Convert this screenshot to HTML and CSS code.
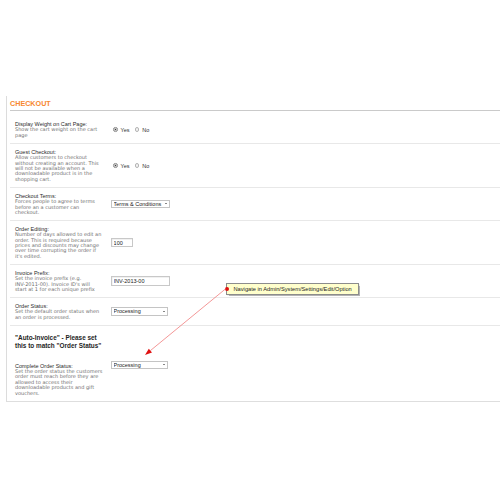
FILE: index.html
```html
<!DOCTYPE html>
<html>
<head>
<meta charset="utf-8">
<title>Checkout settings</title>
<link rel="stylesheet" href="styles.css">
</head>
<body>
<div class="panel">
  <h2 class="section-title">Checkout</h2>

  <div class="row">
    <div class="label-cell">
      <span class="label">Display Weight on Cart Page:</span>
      <span class="help">Show the cart weight on the cart<br>page</span>
    </div>
    <div class="control-cell">
      <label class="radio"><input type="radio" name="cart_weight" checked>Yes</label>
      <label class="radio"><input type="radio" name="cart_weight">No</label>
    </div>
  </div>

  <div class="row">
    <div class="label-cell">
      <span class="label">Guest Checkout:</span>
      <span class="help">Allow customers to checkout<br>without creating an account. This<br>will not be available when a<br>downloadable product is in the<br>shopping cart.</span>
    </div>
    <div class="control-cell">
      <label class="radio"><input type="radio" name="guest" checked>Yes</label>
      <label class="radio"><input type="radio" name="guest">No</label>
    </div>
  </div>

  <div class="row">
    <div class="label-cell">
      <span class="label">Checkout Terms:</span>
      <span class="help">Forces people to agree to terms<br>before an a customer can<br>checkout.</span>
    </div>
    <div class="control-cell">
      <div class="select select-wide"><select><option>Terms &amp; Conditions</option></select></div>
    </div>
  </div>

  <div class="row">
    <div class="label-cell">
      <span class="label">Order Editing:</span>
      <span class="help">Number of days allowed to edit an<br>order. This is required because<br>prices and discounts may change<br>over time corrupting the order if<br>it's edited.</span>
    </div>
    <div class="control-cell">
      <input class="text text-short" type="text" value="100">
    </div>
  </div>

  <div class="row">
    <div class="label-cell">
      <span class="label">Invoice Prefix:</span>
      <span class="help">Set the invoice prefix (e.g.<br>INV-2011-00). Invoice ID's will<br>start at 1 for each unique prefix</span>
    </div>
    <div class="control-cell">
      <input class="text text-wide" type="text" value="INV-2013-00">
    </div>
  </div>

  <div class="row">
    <div class="label-cell">
      <span class="label">Order Status:</span>
      <span class="help">Set the default order status when<br>an order is processed.</span>
    </div>
    <div class="control-cell">
      <div class="select"><select><option>Processing</option></select></div>
    </div>
  </div>

  <div class="row row-auto">
    <h3 class="auto-title">"Auto-Invoice" - Please set<br>this to match "Order Status"</h3>
    <div class="row-body">
      <div class="label-cell">
        <span class="label">Complete Order Status:</span>
        <span class="help">Set the order status the customers<br>order must reach before they are<br>allowed to access their<br>downloadable products and gift<br>vouchers.</span>
      </div>
      <div class="control-cell control-top">
        <div class="select"><select><option>Processing</option></select></div>
      </div>
    </div>
  </div>
</div>

<div class="callout"><span class="callout-dot"></span>Navigate in Admin/System/Settings/Edit/Option</div>
<svg class="pointer" width="500" height="500" viewBox="0 0 500 500">
  <line x1="226" y1="288.5" x2="150.4" y2="350.6" stroke="#ee6a6a" stroke-width="0.7"/>
  <polygon points="145,355 152,352.5 148.8,348.7" fill="#e01010"/>
</svg>
</body>
</html>
```

FILE: styles.css
```css
html, body {
  margin: 0;
  padding: 0;
  background: #ffffff;
}

body {
  width: 500px;
  height: 500px;
  overflow: hidden;
  position: relative;
  font-family: "Liberation Sans", Arial, sans-serif;
  color: #333333;
}

.panel {
  margin: 96px 0 0 6px;
  padding: 3.6px 0 0 3px;
  border-left: 1px solid #dcdcdc;
  border-bottom: 1px solid #dedede;
}

.section-title {
  margin: 0 0 5.8px 0;
  padding: 0 0 2px 0;
  font-size: 7.2px;
  line-height: 8px;
  font-weight: bold;
  text-transform: uppercase;
  color: #f7882f;
  border-bottom: 1px solid #cacaca;
}

.row {
  display: grid;
  grid-template-columns: 101px 1fr;
  align-items: center;
  padding: 4.8px 0;
  border-bottom: 1px solid #e8e8e8;
}

.row-auto {
  display: block;
  border-bottom: none;
}

.row-body {
  display: grid;
  grid-template-columns: 101px 1fr;
  align-items: start;
}

.label-cell {
  padding-left: 5px;
}

.label {
  display: block;
  font-size: 5.5px;
  line-height: 6.3px;
  color: #2a2a2a;
}

.help {
  display: block;
  font-family: "DejaVu Sans", Verdana, sans-serif;
  font-size: 5px;
  line-height: 5.4px;
  color: #707070;
  white-space: nowrap;
}

.control-cell {
  display: flex;
  align-items: center;
}

.control-top {
  margin-top: -2px;
}

.auto-title {
  margin: 3px 0 13px 5px;
  font-size: 6.4px;
  line-height: 8px;
  font-weight: bold;
  color: #1e1e1e;
}

/* radios */
.radio {
  display: flex;
  align-items: center;
  font-size: 5.5px;
  line-height: 6px;
  color: #333333;
  margin-right: 3px;
}

.radio input {
  -webkit-appearance: none;
  appearance: none;
  width: 4.6px;
  height: 4.6px;
  margin: 0 3px 0 2px;
  border: 0.6px solid #b4b4b4;
  border-radius: 50%;
  background: #f4f4f4;
  box-sizing: border-box;
}

.radio input:checked {
  border-color: #8a8a8a;
  background: radial-gradient(circle, #3c3c3c 0, #3c3c3c 38%, #cfcfcf 48%, #e6e6e6 100%);
}

/* selects */
.select {
  position: relative;
  width: 57px;
  height: 8.4px;
}

.select-wide {
  width: 59px;
}

.select select {
  -webkit-appearance: none;
  appearance: none;
  display: block;
  width: 100%;
  height: 100%;
  margin: 0;
  padding: 0 0 0 1.5px;
  box-sizing: border-box;
  border: 0.6px solid #c4c4c4;
  border-radius: 0;
  background: #ffffff;
  font-family: "Liberation Sans", Arial, sans-serif;
  font-size: 5.5px;
  line-height: 7px;
  color: #1a1a1a;
}

.select::after {
  content: "";
  position: absolute;
  right: 3px;
  top: 3.4px;
  border-left: 1.3px solid transparent;
  border-right: 1.3px solid transparent;
  border-top: 1.6px solid #111111;
}

/* text inputs */
.text {
  display: block;
  margin: 0;
  height: 9.8px;
  padding: 0 0 0 1.6px;
  box-sizing: border-box;
  border: 0.6px solid #c8c8c8;
  box-shadow: inset 0.4px 0.4px 0 #e4e4e4;
  font-family: "Liberation Sans", Arial, sans-serif;
  font-size: 5.5px;
  color: #1a1a1a;
  background: #ffffff;
}

.text-short {
  width: 21.5px;
}

.text-wide {
  width: 58.5px;
}

/* annotation */
.callout {
  position: absolute;
  left: 226px;
  top: 282.5px;
  height: 12.5px;
  box-sizing: border-box;
  padding: 0 6.5px 0 6.5px;
  border: 0.6px solid #8c8c8c;
  background: #ffffcc;
  box-shadow: 0.8px 0.8px 0.8px rgba(0, 0, 0, 0.3);
  font-size: 5.7px;
  line-height: 11.3px;
  color: #1e1e1e;
  white-space: nowrap;
}

.callout-dot {
  position: absolute;
  left: -2.2px;
  top: 3.8px;
  width: 4.2px;
  height: 4.2px;
  border-radius: 50%;
  background: #e01010;
}

.pointer {
  position: absolute;
  left: 0;
  top: 0;
  pointer-events: none;
}
```
